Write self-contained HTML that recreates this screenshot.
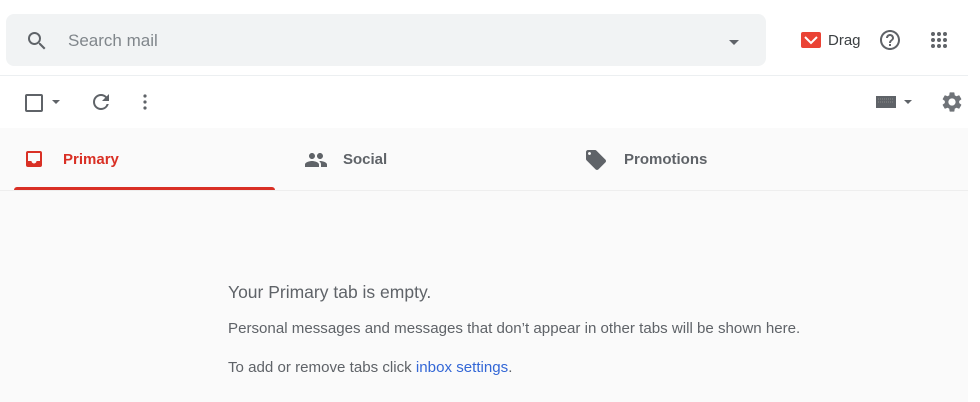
<!DOCTYPE html>
<html><head><style>
body{margin:0;width:980px;height:402px;background:#fff;font-family:"Liberation Sans",Arial,sans-serif;position:relative;overflow:hidden}
.a{position:absolute}
</style></head><body>
<div class="a" style="left:6px;top:14px;width:760px;height:52px;background:#f1f3f4;border-radius:8px"></div>
<svg class="a" style="left:25px;top:29px" width="24" height="24" viewBox="0 0 24 24"><path fill="#5f6368" d="M15.5 14h-.79l-.28-.27A6.470 6.470 0 0 0 16 9.5 6.5 6.5 0 1 0 9.5 16c1.610 0 3.090-.59 4.230-1.57l.27.28v.79l5 4.990L20.490 19l-4.990-5zm-6 0C7.010 14 5 11.990 5 9.5S7.010 5 9.5 5 14 7.010 14 9.5 11.990 14 9.5 14z"/></svg>
<div class="a" style="left:68px;top:31px;font-size:17px;color:#80868b">Search mail</div>
<svg class="a" style="left:722px;top:30px" width="24" height="24" viewBox="0 0 24 24"><path fill="#5f6368" d="M7 10l5 5 5-5z"/></svg>
<svg class="a" style="left:801px;top:32px" width="20" height="16" viewBox="0 0 20 16"><rect width="20" height="16" rx="2" fill="#ea4335"/><path d="M4 5l6 6 6-6" stroke="#fff" stroke-width="2" fill="none"/></svg>
<div class="a" style="left:828px;top:32px;font-size:15px;color:#3c4043">Drag</div>
<svg class="a" style="left:878px;top:28px" width="24" height="24" viewBox="0 0 24 24"><path fill="#5f6368" d="M11 18h2v-2h-2v2zm1-16C6.480 2 2 6.480 2 12s4.480 10 10 10 10-4.480 10-10S17.520 2 12 2zm0 18c-4.410 0-8-3.590-8-8s3.590-8 8-8 8 3.590 8 8-3.590 8-8 8zm0-14c-2.210 0-4 1.790-4 4h2c0-1.100.9-2 2-2s2 .9 2 2c0 2-3 1.750-3 5h2c0-2.250 3-2.500 3-5 0-2.210-1.790-4-4-4z"/></svg>
<svg class="a" style="left:927px;top:28px" width="24" height="24" viewBox="0 0 24 24"><path fill="#5f6368" d="M6 8a2 2 0 1 0 0-4 2 2 0 0 0 0 4zm6 0a2 2 0 1 0 0-4 2 2 0 0 0 0 4zm6 0a2 2 0 1 0 0-4 2 2 0 0 0 0 4zM6 14a2 2 0 1 0 0-4 2 2 0 0 0 0 4zm6 0a2 2 0 1 0 0-4 2 2 0 0 0 0 4zm6 0a2 2 0 1 0 0-4 2 2 0 0 0 0 4zM6 20a2 2 0 1 0 0-4 2 2 0 0 0 0 4zm6 0a2 2 0 1 0 0-4 2 2 0 0 0 0 4zm6 0a2 2 0 1 0 0-4 2 2 0 0 0 0 4z"/></svg>
<div class="a" style="left:0;top:75px;width:968px;height:1px;background:#eceff1"></div>
<div class="a" style="left:25px;top:94px;width:14px;height:14px;border:2px solid #5f6368;border-radius:2px"></div>
<svg class="a" style="left:50px;top:96px" width="12" height="12" viewBox="0 0 12 12"><path fill="#5f6368" d="M2 4l4 4 4-4z"/></svg>
<svg class="a" style="left:89px;top:90px" width="24" height="24" viewBox="0 0 24 24"><path fill="#5f6368" d="M17.650 6.350A7.958 7.958 0 0 0 12 4c-4.420 0-7.990 3.580-7.990 8s3.570 8 7.990 8c3.730 0 6.840-2.550 7.730-6h-2.080A5.990 5.990 0 0 1 12 18c-3.310 0-6-2.690-6-6s2.690-6 6-6c1.660 0 3.140.69 4.220 1.780L13 11h7V4l-2.350 2.350z"/></svg>
<svg class="a" style="left:133px;top:90px" width="24" height="24" viewBox="0 0 24 24"><circle cx="12" cy="6" r="1.6" fill="#5f6368"/><circle cx="12" cy="12" r="1.6" fill="#5f6368"/><circle cx="12" cy="18" r="1.6" fill="#5f6368"/></svg>
<svg class="a" style="left:876px;top:96px" width="20" height="12" viewBox="0 0 20 12"><rect width="20" height="12" fill="#5f6368"/><path d="M2 3h16M2 6h16" stroke="#888" stroke-width="1" stroke-dasharray="1 1"/></svg>
<svg class="a" style="left:902px;top:96px" width="12" height="12" viewBox="0 0 12 12"><path fill="#5f6368" d="M2 4l4 4 4-4z"/></svg>
<svg class="a" style="left:940px;top:90px" width="24" height="24" viewBox="0 0 24 24"><path fill="#6f7378" d="M19.140 12.940c.04-.3.06-.61.06-.94 0-.32-.02-.64-.07-.94l2.030-1.580a.49.49 0 0 0 .12-.61l-1.920-3.320a.488.488 0 0 0-.59-.22l-2.390.96c-.5-.38-1.030-.7-1.620-.94l-.36-2.540a.484.484 0 0 0-.48-.41h-3.840c-.24 0-.43.17-.47.41l-.36 2.540c-.59.24-1.130.57-1.620.94l-2.390-.96c-.22-.08-.47 0-.59.22L2.740 8.870c-.12.21-.08.47.12.61l2.030 1.580c-.05.3-.09.63-.09.94s.02.64.07.94l-2.030 1.580a.49.49 0 0 0-.12.61l1.920 3.320c.12.22.37.29.59.22l2.390-.96c.5.38 1.030.7 1.620.94l.36 2.540c.05.24.24.41.48.41h3.840c.24 0 .44-.17.47-.41l.36-2.540c.59-.24 1.130-.56 1.620-.94l2.390.96c.22.08.47 0 .59-.22l1.920-3.320c.12-.22.07-.47-.12-.61l-2.010-1.580zM12 15.600c-1.980 0-3.600-1.620-3.600-3.600s1.620-3.600 3.600-3.600 3.600 1.620 3.600 3.600-1.620 3.600-3.600 3.600z"/></svg>
<div class="a" style="left:0;top:128px;width:968px;height:274px;background:#fafafa"></div>
<div class="a" style="left:0;top:190px;width:968px;height:1px;background:#eeeeee"></div>
<div class="a" style="left:14px;top:187px;width:261px;height:3px;background:#d93025;border-radius:3px 3px 0 0"></div>
<svg class="a" style="left:24px;top:149px" width="20" height="20" viewBox="0 0 20 20"><path fill="#d93025" d="M16 2H4a2 2 0 0 0-2 2v12a2 2 0 0 0 2 2h12a2 2 0 0 0 2-2V4a2 2 0 0 0-2-2zm0 10h-3.500a2.500 2.500 0 0 1-5 0H4V4h12z"/></svg>
<div class="a" style="left:63px;top:151px;font-size:15px;font-weight:bold;color:#d93025">Primary</div>
<svg class="a" style="left:304px;top:148px" width="24" height="24" viewBox="0 0 24 24"><path fill="#5f6368" d="M16 11c1.660 0 2.990-1.340 2.990-3S17.660 5 16 5c-1.660 0-3 1.340-3 3s1.340 3 3 3zm-8 0c1.660 0 2.990-1.340 2.990-3S9.660 5 8 5C6.340 5 5 6.340 5 8s1.340 3 3 3zm0 2c-2.330 0-7 1.170-7 3.500V19h14v-2.500c0-2.330-4.670-3.500-7-3.500zm8 0c-.29 0-.62.02-.97.05 1.160.84 1.970 1.970 1.970 3.450V19h6v-2.500c0-2.330-4.670-3.500-7-3.500z"/></svg>
<div class="a" style="left:343px;top:151px;font-size:15px;font-weight:bold;color:#5f6368">Social</div>
<svg class="a" style="left:584px;top:148px" width="24" height="24" viewBox="0 0 24 24"><path fill="#5f6368" d="M21.410 11.580l-9-9C12.050 2.220 11.550 2 11 2H4c-1.100 0-2 .9-2 2v7c0 .55.22 1.050.59 1.420l9 9c.36.36.86.58 1.410.58.55 0 1.050-.22 1.410-.59l7-7c.37-.36.59-.86.59-1.410 0-.55-.23-1.060-.59-1.420zM5.500 7C4.670 7 4 6.330 4 5.500S4.670 4 5.500 4 7 4.670 7 5.500 6.330 7 5.500 7z"/></svg>
<div class="a" style="left:624px;top:151px;font-size:15px;font-weight:bold;color:#5f6368">Promotions</div>
<div class="a" style="left:228px;top:282px;font-size:17.5px;color:#5f6368">Your Primary tab is empty.</div>
<div class="a" style="left:228px;top:320px;font-size:15.1px;color:#5f6368">Personal messages and messages that don’t appear in other tabs will be shown here.</div>
<div class="a" style="left:228px;top:359px;font-size:15.1px;color:#5f6368">To add or remove tabs click <span style="color:#3367d6">inbox settings</span>.</div>
</body></html>
